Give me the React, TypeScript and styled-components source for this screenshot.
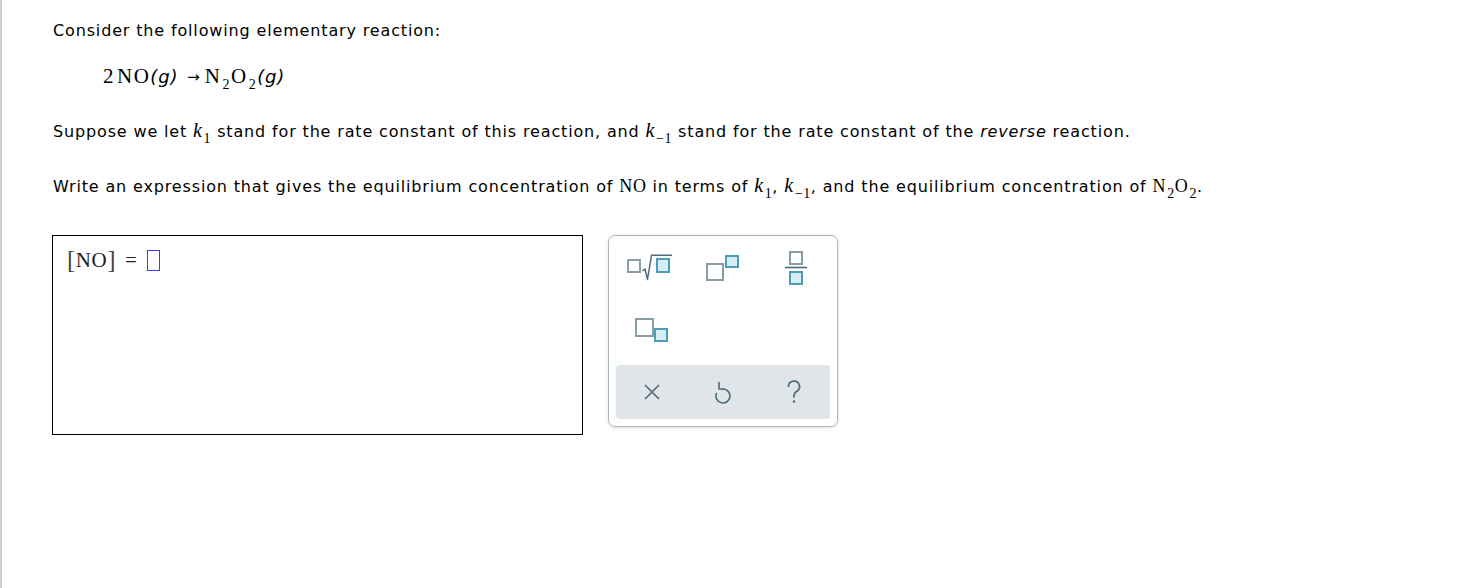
import styled, { createGlobalStyle } from "styled-components";

const GlobalStyle = createGlobalStyle`
  html, body {
    margin: 0;
    padding: 0;
    background: #fff;
  }
`;

const Page = styled.div`
  min-height: 588px;
  box-sizing: border-box;
  border-left: 2px solid #c6cfd4;
  padding: 20px 0 0 51px;
  font-family: "DejaVu Sans", Verdana, sans-serif;
  font-size: 16px;
  letter-spacing: 0.85px;
  color: #000;
`;

const Para = styled.p<{ $top: number }>`
  margin: ${(p) => p.$top}px 0 0 0;
  line-height: 22px;
  height: 22px;
  white-space: nowrap;
`;

const Equation = styled.div`
  margin: 23px 0 0 50px;
  line-height: 22px;
  height: 22px;
  font-family: "Liberation Serif", "Times New Roman", serif;
  font-size: 21px;
  letter-spacing: 1.5px;
  white-space: nowrap;
`;

const Coef = styled.span`
  margin-right: 2px;
`;

const Phase = styled.i`
  font-family: "DejaVu Sans", Verdana, sans-serif;
  font-size: 18px;
  letter-spacing: 0.8px;
`;

const Arrow = styled.span`
  display: inline-block;
  margin: 0 5px 0 9px;
  font-family: "DejaVu Sans", sans-serif;
  font-size: 15px;
  letter-spacing: 0;
  vertical-align: 1px;
`;

const Math = styled.span`
  font-family: "Liberation Serif", "Times New Roman", serif;
  font-size: 18px;
  letter-spacing: 0.6px;
`;

const Var = styled.i`
  font-family: "Liberation Serif", "Times New Roman", serif;
  font-size: 20px;
`;

const Sub = styled.sub`
  font-size: 14px;
  vertical-align: -6px;
  line-height: 0;
  margin-left: 1px;
`;

const Work = styled.div`
  display: flex;
  align-items: flex-start;
  gap: 25px;
  margin: 39px 0 0 -1px;
`;

const AnswerBox = styled.div`
  width: 531px;
  height: 200px;
  box-sizing: border-box;
  border: 1px solid #000;
  padding: 11px 0 0 14px;
  font-family: "Liberation Serif", "Times New Roman", serif;
  font-size: 21px;
  letter-spacing: 0.5px;
  color: #222;
`;

const AnswerLine = styled.div`
  display: flex;
  align-items: center;
  height: 26px;
`;

const Bracket = styled.span`
  font-size: 25px;
  font-weight: 300;
  color: #444;
`;

const Equals = styled.span`
  margin: 0 10px 0 9px;
`;

const Slot = styled.span`
  display: inline-block;
  width: 11px;
  height: 19px;
  border: 1.5px solid #3b3bff;
`;

const Palette = styled.div`
  width: 230px;
  height: 192px;
  box-sizing: border-box;
  border: 1px solid #a9b6bc;
  border-radius: 7px;
  box-shadow: 0 1px 4px rgba(0, 0, 0, 0.12);
  padding: 0 7px 7px 7px;
  display: flex;
  flex-direction: column;
`;

const IconGrid = styled.div`
  flex: 1;
  display: grid;
  grid-template-columns: repeat(3, 1fr);
  grid-template-rows: 64px 60px;
`;

const IconCell = styled.div<{ $dx?: number }>`
  display: flex;
  align-items: center;
  justify-content: center;
  margin-left: ${(p) => p.$dx ?? 0}px;
`;

const ActionBar = styled.div`
  height: 54px;
  background: #dfe5e8;
  border-radius: 4px;
  display: grid;
  grid-template-columns: repeat(3, 1fr);
  align-items: center;
  justify-items: center;
`;

const GRAY = "#8a9ca4";
const TEAL = "#4c9db5";
const TEAL_FILL = "#d6edf4";
const DARK = "#4e6c78";

const SqrtIcon = () => (
  <svg width="46" height="28" viewBox="0 0 46 28">
    <rect x="1" y="6" width="12" height="12" fill="#fff" stroke={GRAY} strokeWidth="2" />
    <path d="M15.5 17 L18 15 L20.5 25.5 L24.5 1.2 L45 1.2" fill="none" stroke={DARK} strokeWidth="1.5" strokeLinejoin="round" />
    <rect x="30" y="5" width="12" height="13" fill={TEAL_FILL} stroke={TEAL} strokeWidth="2" />
  </svg>
);

const SupIcon = () => (
  <svg width="33" height="26" viewBox="0 0 33 26">
    <rect x="1" y="9" width="16" height="16" fill="#fff" stroke={GRAY} strokeWidth="2" />
    <rect x="20" y="1" width="12" height="11" fill={TEAL_FILL} stroke={TEAL} strokeWidth="2" />
  </svg>
);

const FracIcon = () => (
  <svg width="22" height="34" viewBox="0 0 22 34">
    <rect x="5" y="1" width="12" height="12" fill="#fff" stroke={GRAY} strokeWidth="2" />
    <line x1="0" y1="16.5" x2="22" y2="16.5" stroke={DARK} strokeWidth="1.6" />
    <rect x="5" y="21" width="12" height="12" fill={TEAL_FILL} stroke={TEAL} strokeWidth="2" />
  </svg>
);

const SubIcon = () => (
  <svg width="33" height="24" viewBox="0 0 33 24">
    <rect x="1" y="1" width="17" height="17" fill="#fff" stroke={GRAY} strokeWidth="2" />
    <rect x="20" y="11" width="12" height="12" fill={TEAL_FILL} stroke={TEAL} strokeWidth="2" />
  </svg>
);

const ClearIcon = () => (
  <svg width="16" height="16" viewBox="0 0 16 16">
    <path d="M1.5 1.5 L14.5 14.5 M14.5 1.5 L1.5 14.5" stroke={DARK} strokeWidth="1.7" strokeLinecap="round" />
  </svg>
);

const UndoIcon = () => (
  <svg width="18" height="23" viewBox="0 0 18 23">
    <path
      d="M9 8 A7 7 0 1 1 2.4 12.6"
      fill="none"
      stroke={DARK}
      strokeWidth="1.6"
      strokeLinecap="round"
    />
    <path d="M5 1.5 L5 8 L9.5 8" fill="none" stroke={DARK} strokeWidth="1.6" strokeLinecap="round" strokeLinejoin="round" />
  </svg>
);

const HelpIcon = () => (
  <svg width="14" height="24" viewBox="0 0 14 24">
    <path
      d="M1.5 6.5 A5.5 5.5 0 1 1 9.5 11.5 Q7 13 7 16 L7 17"
      fill="none"
      stroke={DARK}
      strokeWidth="1.7"
      strokeLinecap="round"
    />
    <circle cx="7" cy="21.5" r="1.2" fill={DARK} />
  </svg>
);

const App = () => {
  return (
    <>
      <GlobalStyle />
      <Page>
        <Para $top={0}>Consider the following elementary reaction:</Para>
        <Equation>
          <Coef>2</Coef>NO<Phase>(g)</Phase>
          <Arrow>&#8594;</Arrow>N<Sub>2</Sub>O<Sub>2</Sub>
          <Phase>(g)</Phase>
        </Equation>
        <Para $top={32}>
          Suppose we let{" "}
          <Math>
            <Var>k</Var>
            <Sub>1</Sub>
          </Math>{" "}
          stand for the rate constant of this reaction, and{" "}
          <Math>
            <Var>k</Var>
            <Sub>&#8722;1</Sub>
          </Math>{" "}
          stand for the rate constant of the <i>reverse</i> reaction.
        </Para>
        <Para $top={33}>
          Write an expression that gives the equilibrium concentration of <Math>NO</Math> in terms of{" "}
          <Math>
            <Var>k</Var>
            <Sub>1</Sub>
          </Math>
          ,{" "}
          <Math>
            <Var>k</Var>
            <Sub>&#8722;1</Sub>
          </Math>
          , and the equilibrium concentration of{" "}
          <Math>
            N<Sub>2</Sub>O<Sub>2</Sub>
          </Math>
          .
        </Para>
        <Work>
          <AnswerBox>
            <AnswerLine>
              <Bracket>[</Bracket>NO<Bracket>]</Bracket>
              <Equals>=</Equals>
              <Slot />
            </AnswerLine>
          </AnswerBox>
          <Palette>
            <IconGrid>
              <IconCell $dx={-3}>
                <SqrtIcon />
              </IconCell>
              <IconCell>
                <SupIcon />
              </IconCell>
              <IconCell $dx={4}>
                <FracIcon />
              </IconCell>
              <IconCell>
                <SubIcon />
              </IconCell>
            </IconGrid>
            <ActionBar>
              <ClearIcon />
              <UndoIcon />
              <HelpIcon />
            </ActionBar>
          </Palette>
        </Work>
      </Page>
    </>
  );
};

export default App;
